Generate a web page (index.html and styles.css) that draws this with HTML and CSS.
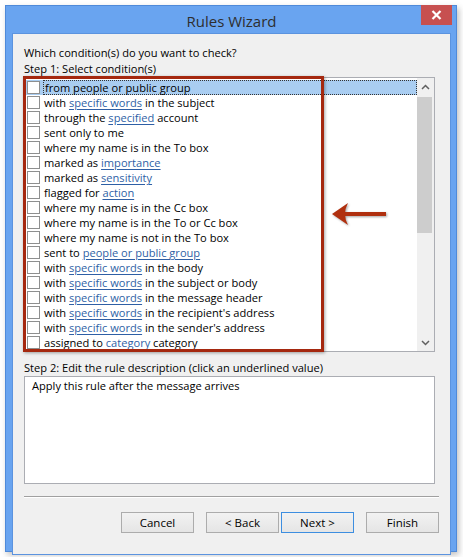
FILE: index.html
```html
<!DOCTYPE html>
<html lang="en">
  <head>
    <meta charset="UTF-8" />
    <title>Rules Wizard</title>
    <link rel="stylesheet" href="styles.css">
  </head>
  <body>
    <div class="window">
      <div class="titlebar">
        <span class="title">Rules Wizard</span>
        <div class="close">
          <svg width="11" height="10" viewBox="0 0 11 10">
            <path d="M1.5 1 L9.5 9 M9.5 1 L1.5 9" stroke="#fff" stroke-width="2.2" />
          </svg>
        </div>
      </div>

      <div class="content">
        <p class="label">Which condition(s) do you want to check?</p>
        <p class="label">Step 1: Select condition(s)</p>

        <div class="listbox">
          <ul class="conditions">
            <li class="row selected"><span class="check"></span><span class="text">from people or public group</span></li>
            <li class="row"><span class="check"></span><span class="text">with <a>specific words</a> in the subject</span></li>
            <li class="row"><span class="check"></span><span class="text">through the <a>specified</a> account</span></li>
            <li class="row"><span class="check"></span><span class="text">sent only to me</span></li>
            <li class="row"><span class="check"></span><span class="text">where my name is in the To box</span></li>
            <li class="row"><span class="check"></span><span class="text">marked as <a>importance</a></span></li>
            <li class="row"><span class="check"></span><span class="text">marked as <a>sensitivity</a></span></li>
            <li class="row"><span class="check"></span><span class="text">flagged for <a>action</a></span></li>
            <li class="row"><span class="check"></span><span class="text">where my name is in the Cc box</span></li>
            <li class="row"><span class="check"></span><span class="text">where my name is in the To or Cc box</span></li>
            <li class="row"><span class="check"></span><span class="text">where my name is not in the To box</span></li>
            <li class="row"><span class="check"></span><span class="text">sent to <a>people or public group</a></span></li>
            <li class="row"><span class="check"></span><span class="text">with <a>specific words</a> in the body</span></li>
            <li class="row"><span class="check"></span><span class="text">with <a>specific words</a> in the subject or body</span></li>
            <li class="row"><span class="check"></span><span class="text">with <a>specific words</a> in the message header</span></li>
            <li class="row"><span class="check"></span><span class="text">with <a>specific words</a> in the recipient's address</span></li>
            <li class="row"><span class="check"></span><span class="text">with <a>specific words</a> in the sender's address</span></li>
            <li class="row"><span class="check"></span><span class="text">assigned to <a>category</a> category</span></li>
          </ul>

          <div class="scrollbar">
            <div class="scroll-btn">
              <svg width="9" height="6" viewBox="0 0 9 6"><path d="M1 5 L4.5 1.5 L8 5" fill="none" stroke="#606060" stroke-width="1.5" /></svg>
            </div>
            <div class="track"><div class="thumb"></div></div>
            <div class="scroll-btn">
              <svg width="9" height="6" viewBox="0 0 9 6"><path d="M1 1 L4.5 4.5 L8 1" fill="none" stroke="#606060" stroke-width="1.5" /></svg>
            </div>
          </div>

          <!-- red callout around the condition names -->
          <div class="callout-box"></div>
        </div>

        <svg class="callout-arrow" width="60" height="26" viewBox="0 0 60 26">
          <rect x="10" y="9" width="44" height="4" fill="#b0300f" />
          <path d="M0 11 L16 0 Q10 11 16 22 Z" fill="#b0300f" />
        </svg>

        <p class="label step2">Step 2: Edit the rule description (click an underlined value)</p>
        <div class="description">Apply this rule after the message arrives</div>

        <div class="separator"></div>

        <div class="buttons">
          <button class="btn">Cancel</button>
          <button class="btn back">&lt; Back</button>
          <button class="btn default">Next &gt;</button>
          <button class="btn finish">Finish</button>
        </div>
      </div>
    </div>
  </body>
</html>
```

FILE: styles.css
```css
body {
  margin: 0;
  background: #fff;
  font-family: "Open Sans", "Noto Sans", sans-serif;
  font-size: 11.1px;
  color: #000;
}
.window {
  position: relative;
  box-sizing: border-box;
  width: 452px;
  height: 547px;
  margin: 5px;
  background: #69a4f0;
  border: 1px solid #4f8ad9;
  padding: 0 5px 7px 6px;
  box-shadow: 2px 3px 6px rgba(0, 0, 0, 0.25);
}
.titlebar {
  height: 27px;
  display: flex;
  justify-content: center;
  align-items: center;
  position: relative;
}
.title {
  font-size: 15px;
  color: #2e2e2e;
  margin-top: 2px;
}
.close {
  position: absolute;
  top: -1px;
  right: -1px;
  width: 31px;
  height: 20px;
  background: #c75050;
  display: flex;
  justify-content: center;
  align-items: center;
}
.content {
  position: relative;
  height: 509px;
  background: #f0f0f0;
  border: 1px solid #5b93df;
  padding: 11px 11px 0 11px;
}
.label {
  margin: 0;
  line-height: 16px;
  white-space: nowrap;
}
.listbox {
  position: relative;
  box-sizing: border-box;
  width: 411px;
  height: 275px;
  background: #fff;
  border: 1px solid #abadb3;
  display: flex;
}
.conditions {
  list-style: none;
  margin: 0;
  padding: 2px 0 0 1px;
  flex: 1;
}
.row {
  height: 15px;
  display: flex;
  align-items: center;
  white-space: nowrap;
}
.row.selected {
  background: #a9cdf1;
}
.row.selected .text {
  flex: 1;
  height: 13px;
  display: flex;
  align-items: center;
  border: 1px dotted #333;
  margin-left: -1px;
  padding-left: 1px;
  line-height: 13px;
}
.check {
  box-sizing: border-box;
  width: 13px;
  height: 13px;
  margin-left: 1px;
  margin-right: 4px;
  border: 1px solid #8e8f8f;
  background: #fff;
}
.text {
  line-height: 15px;
}
.text a {
  color: #2e5fa5;
  text-decoration: underline;
  text-underline-offset: 2px;
}
.scrollbar {
  width: 17px;
  display: flex;
  flex-direction: column;
  background: #f0f0f0;
}
.scroll-btn {
  height: 17px;
  display: flex;
  justify-content: center;
  align-items: center;
}
.track {
  flex: 1;
  padding-top: 2px;
}
.thumb {
  width: 15px;
  height: 136px;
  background: #cdcdcd;
}
.callout-box {
  position: absolute;
  left: -2px;
  top: -2px;
  width: 295px;
  height: 270px;
  border: 3px solid #a5280f;
  box-shadow: 1px 1px 3px rgba(0, 0, 0, 0.35);
}
.callout-arrow {
  position: absolute;
  left: 319px;
  top: 169px;
  filter: drop-shadow(1px 1px 1px rgba(0, 0, 0, 0.35));
}
.step2 {
  margin-top: 8px;
}
.description {
  box-sizing: border-box;
  width: 411px;
  height: 108px;
  background: #fff;
  border: 1px solid #abadb3;
  padding: 1px 7px;
  line-height: 15px;
}
.separator {
  width: 415px;
  margin-top: 12px;
  border-top: 1px solid #a0a0a0;
  border-bottom: 1px solid #fff;
}
.buttons {
  display: flex;
  justify-content: flex-end;
  margin-top: 14px;
  width: 415px;
}
.btn {
  box-sizing: border-box;
  width: 73px;
  height: 21px;
  padding: 0;
  font-family: inherit;
  font-size: 11.5px;
  color: #000;
  background: linear-gradient(#f2f2f2, #e5e5e5);
  border: 1px solid #acacac;
  border-radius: 0;
}
.back {
  margin-left: 12px;
}
.default {
  margin-left: 2px;
  border-color: #3d8ee0;
}
.finish {
  margin-left: 12px;
}
```
